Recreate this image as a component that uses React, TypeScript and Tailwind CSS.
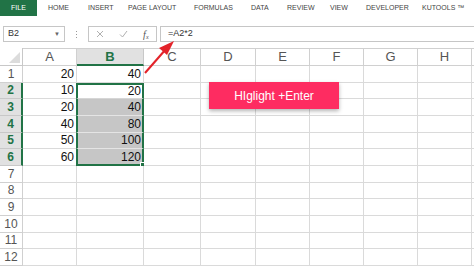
import React from "react";

const tabs = [
  { t: "HOME", w: "w-[40px]" },
  { t: "INSERT", w: "w-[40px]" },
  { t: "PAGE LAYOUT", w: "w-[66px]" },
  { t: "FORMULAS", w: "w-[57px]" },
  { t: "DATA", w: "w-[36px]" },
  { t: "REVIEW", w: "w-[43px]" },
  { t: "VIEW", w: "w-[36px]" },
  { t: "DEVELOPER", w: "w-[56px]" },
  { t: "KUTOOLS ™", w: "w-[52px]" },
];
const cols = ["A", "B", "C", "D", "E", "F", "G", "H", ""];
const colA = [20, 10, 20, 40, 50, 60];
const colB = [40, 20, 40, 80, 100, 120];

const RowHead = ({ n }: { n: number }) => {
  const sel = n >= 2 && n <= 6;
  return (
    <div
      className={
        sel
          ? "flex items-center justify-center bg-[#e1e1e1] text-[#217346] font-bold text-[12px] border-b border-b-[#c8c8c8] border-r-2 border-r-[#217346]"
          : "flex items-center justify-center bg-white text-[#555] text-[12px] border-b border-r border-[#d0d0d0]"
      }
    >
      {n}
    </div>
  );
};

const Cell = ({ row, col }: { row: number; col: number }) => {
  let cls = "relative flex items-center justify-end pr-[2px] text-[12px] text-[#111] bg-white border-r border-b border-[#dadada]";
  let val: number | string = "";
  if (col === 0 && row <= 6) val = colA[row - 1];
  if (col === 1) {
    if (row <= 6) val = colB[row - 1];
    if (row === 2)
      cls = "relative flex items-center justify-end pr-[1px] text-[12px] text-[#111] bg-white border-t-2 border-x-2 border-b border-[#217346] border-b-[#d6d6d6] -ml-px";
    if (row >= 3 && row <= 5)
      cls = "relative flex items-center justify-end pr-[1px] text-[12px] text-[#111] bg-[#c6c6c6] border-x-2 border-b border-[#217346] border-b-[#e4e4e4] -ml-px";
    if (row === 6)
      cls = "relative flex items-center justify-end pr-[1px] text-[12px] text-[#111] bg-[#c6c6c6] border-x-2 border-b-2 border-[#217346] -ml-px";
  }
  return (
    <div className={cls}>
      {val}
      {col === 1 && row === 6 && (
        <span className="absolute -right-[4px] -bottom-[4px] w-[6px] h-[6px] bg-[#217346] border border-white" />
      )}
    </div>
  );
};

export default function App() {
  return (
    <div className="relative w-[474px] h-[268px] overflow-hidden bg-white" style={{ fontFamily: '"Liberation Sans", sans-serif' }}>
      {/* ribbon tabs */}
      <div className="flex items-center h-[16px] text-[7px] text-[#444] whitespace-nowrap">
        <div className="flex items-center justify-center w-[37px] h-full bg-[#217346] text-white">FILE</div>
        <div className="flex pl-[11px]">
          {tabs.map((t) => (
            <span key={t.t} className={t.w}>
              {t.t}
            </span>
          ))}
        </div>
      </div>

      {/* formula bar */}
      <div className="flex items-center mt-[10px] h-[16px] text-[9px] text-[#333]">
        <div className="flex items-center justify-between ml-[3px] w-[62px] h-full border border-[#c6c6c6] px-[4px]">
          <span>B2</span>
          <span className="text-[6px] text-[#666]">▼</span>
        </div>
        <div className="flex flex-col gap-[2px] mx-[11px]">
          <span className="w-[1px] h-[1px] bg-[#999]" />
          <span className="w-[1px] h-[1px] bg-[#999]" />
          <span className="w-[1px] h-[1px] bg-[#999]" />
        </div>
        <div className="flex items-center justify-around w-[69px] h-full border border-[#c6c6c6]">
          <svg width="8" height="8" viewBox="0 0 8 8">
            <path d="M1 1 L7 7 M7 1 L1 7" stroke="#b0b0b0" strokeWidth="1" />
          </svg>
          <svg width="9" height="8" viewBox="0 0 9 8">
            <path d="M1 4.5 L3.5 7 L8 1" stroke="#b0b0b0" strokeWidth="1" fill="none" />
          </svg>
          <span className="italic text-[10px] text-[#555]" style={{ fontFamily: '"Liberation Serif", serif' }}>
            f<sub className="text-[6px]">x</sub>
          </span>
        </div>
        <div className="flex items-center flex-1 h-full ml-[3px] border-y border-l border-[#c6c6c6] pl-[7px]">=A2*2</div>
      </div>

      {/* sheet */}
      <div className="grid mt-[6px] grid-cols-[23px_54px_67px_57px_55px_54px_54px_54px_54px_1fr] grid-rows-[18px] auto-rows-[16.67px]">
        <div className="relative bg-white border-r border-b border-[#c8c8c8]">
          <span
            className="absolute right-[2px] bottom-[2px] w-0 h-0"
            style={{ borderBottom: "11px solid #dcdcdc", borderLeft: "11px solid transparent" }}
          />
        </div>
        {cols.map((c) =>
          c === "B" ? (
            <div key={c} className="flex items-center justify-center bg-[#e1e1e1] text-[#217346] font-bold text-[13px] border-t border-t-[#d0d0d0] border-r border-r-[#c8c8c8] border-b-2 border-b-[#217346]">
              {c}
            </div>
          ) : (
            <div key={c || "z"} className="flex items-center justify-center bg-white text-[#555] text-[13px] border-t border-r border-b border-[#d0d0d0]">
              {c}
            </div>
          )
        )}
        {Array.from({ length: 12 }, (_, i) => i + 1).map((r) => (
          <React.Fragment key={r}>
            <RowHead n={r} />
            {cols.map((c, ci) => (
              <Cell key={ci} row={r} col={ci} />
            ))}
          </React.Fragment>
        ))}
      </div>

      {/* overlay button */}
      <div className="absolute left-[209px] top-[82px] w-[130px] h-[27px] flex items-center justify-center bg-[#fe2c61] text-white text-[12px] shadow-[0_2px_4px_rgba(0,0,0,0.3)]">
        HIglight +Enter
      </div>

      {/* red arrow */}
      <svg className="absolute left-0 top-0 pointer-events-none" width="474" height="268">
        <line x1="145" y1="73" x2="166" y2="49" stroke="#e3232a" strokeWidth="2" />
        <polygon points="174,41 159,48 167,55" fill="#e3232a" />
      </svg>
    </div>
  );
}
